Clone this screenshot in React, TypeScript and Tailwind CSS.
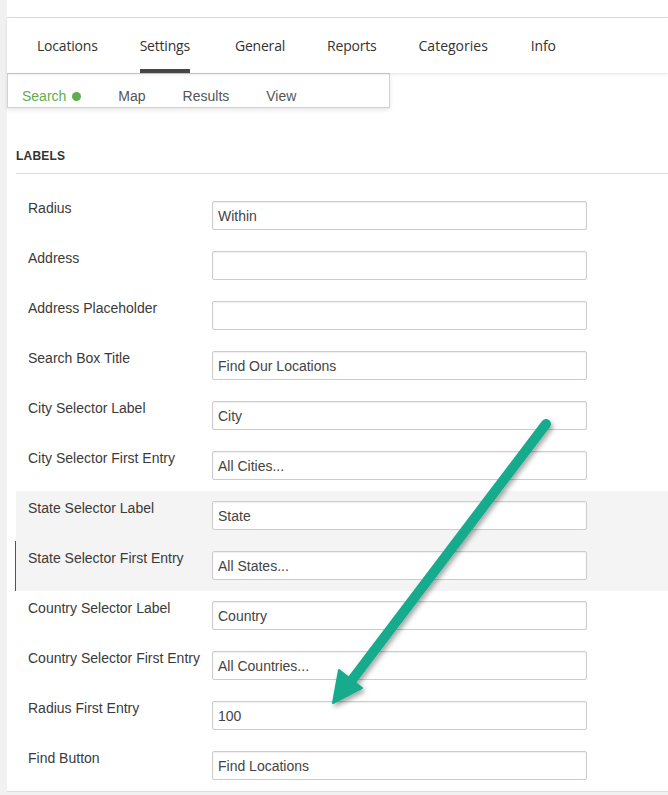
import React from 'react';

const tabs: { name: string; cls: string }[] = [
  { name: 'Locations', cls: 'mr-[42px]' },
  { name: 'Settings', cls: 'mr-[45px]' },
  { name: 'General', cls: 'mr-[42px]' },
  { name: 'Reports', cls: 'mr-[42px]' },
  { name: 'Categories', cls: 'mr-[43px] tracking-[0px]' },
  { name: 'Info', cls: 'mr-[42px]' },
];
const subTabs: { name: string; cls: string }[] = [
  { name: 'Search', cls: 'mr-[37px]' },
  { name: 'Map', cls: 'mr-[37px]' },
  { name: 'Results', cls: 'mr-[37px]' },
  { name: 'View', cls: 'mr-[37px]' },
];

const fields: { label: string; value: string; shaded?: boolean; marked?: boolean }[] = [
  { label: 'Radius', value: 'Within' },
  { label: 'Address', value: '' },
  { label: 'Address Placeholder', value: '' },
  { label: 'Search Box Title', value: 'Find Our Locations' },
  { label: 'City Selector Label', value: 'City' },
  { label: 'City Selector First Entry', value: 'All Cities...' },
  { label: 'State Selector Label', value: 'State', shaded: true },
  { label: 'State Selector First Entry', value: 'All States...', shaded: true, marked: true },
  { label: 'Country Selector Label', value: 'Country' },
  { label: 'Country Selector First Entry', value: 'All Countries...' },
  { label: 'Radius First Entry', value: '100' },
  { label: 'Find Button', value: 'Find Locations' },
];

const Arrow: React.FC = () => (
  <svg className="absolute left-0 top-0 pointer-events-none" width="668" height="795" viewBox="0 0 668 795">
    <defs>
      <filter id="sh" x="-20%" y="-20%" width="140%" height="140%">
        <feDropShadow dx="2" dy="3" stdDeviation="2.5" floodColor="#000" floodOpacity="0.35" />
      </filter>
    </defs>
    <g filter="url(#sh)" fill="#17ab8c" stroke="#17ab8c">
      <line x1="546" y1="424" x2="352" y2="680" strokeWidth="10" strokeLinecap="round" />
      <polygon points="333,703 339,670 362,688" strokeWidth="2" strokeLinejoin="round" />
    </g>
  </svg>
);

export default function App() {
  return (
    <div className="relative w-[668px] h-[795px] overflow-hidden bg-[#f1f1f1]" style={{ fontFamily: '"Liberation Sans", Arial, sans-serif' }}>
      <div className="ml-[7px] bg-white">
        <div className="h-[18px] border-b border-[#dcdcdc]" />
        <div
          className="flex h-[55px] pl-[30px] shadow-[0_1px_3px_rgba(0,0,0,0.12)] relative z-10"
          style={{ fontFamily: '"Open Sans", "Noto Sans", sans-serif' }}
        >
          {tabs.map((t) => (
            <div key={t.name} className={`relative flex items-center text-[14px] text-[#333] tracking-[-0.2px] ${t.cls}`}>
              {t.name}
              {t.name === 'Settings' && <span className="absolute left-0 right-0 bottom-0 h-[4px] bg-[#464646]" />}
            </div>
          ))}
        </div>
        <div className="flex w-[383px] h-[35px] items-center border border-[#d2d2d2] shadow-[0_2px_4px_rgba(0,0,0,0.1)] pl-[14px] pt-[11px] text-[14px] text-[#555]">
          {subTabs.map((t) => (
            <div key={t.name} className={`flex items-center ${t.cls}`}>
              {t.name === 'Search' ? (
                <span className="flex items-center text-[#5fad4e]">
                  Search
                  <span className="ml-[6px] w-[9px] h-[9px] rounded-full bg-[#5fad4e]" />
                </span>
              ) : (
                t.name
              )}
            </div>
          ))}
        </div>
        <div className="pl-[9px] pt-[40px]">
          <div className="h-[27px] text-[12px] font-bold text-[#333] border-b border-[#dcdcdc] tracking-[0.2px] -mt-[1px]">LABELS</div>
          <div className="pt-[17px]">
            {fields.map((f) => (
              <div
                key={f.label}
                className={`relative flex h-[50px] pt-[10px] pl-[12px] ${f.shaded ? 'bg-[#f4f4f4]' : ''}`}
              >
                {f.marked && <span className="absolute left-[-1px] top-0 bottom-0 w-[1px] bg-[#555]" />}
                <div className="w-[184px] text-[14px] text-[#3a3a3a] leading-[14px]">{f.label}</div>
                <input
                  readOnly
                  value={f.value}
                  className="w-[375px] h-[29px] px-[5px] text-[14px] text-[#444] bg-white border border-[#ccc] rounded-[2px] shadow-[inset_0_1px_2px_rgba(0,0,0,0.07)] outline-none"
                  style={{ fontFamily: '"Liberation Sans", Arial, sans-serif' }}
                />
              </div>
            ))}
          </div>
        </div>
        <div className="border-t border-[#dcdcdc]" />
      </div>
      <Arrow />
    </div>
  );
}
